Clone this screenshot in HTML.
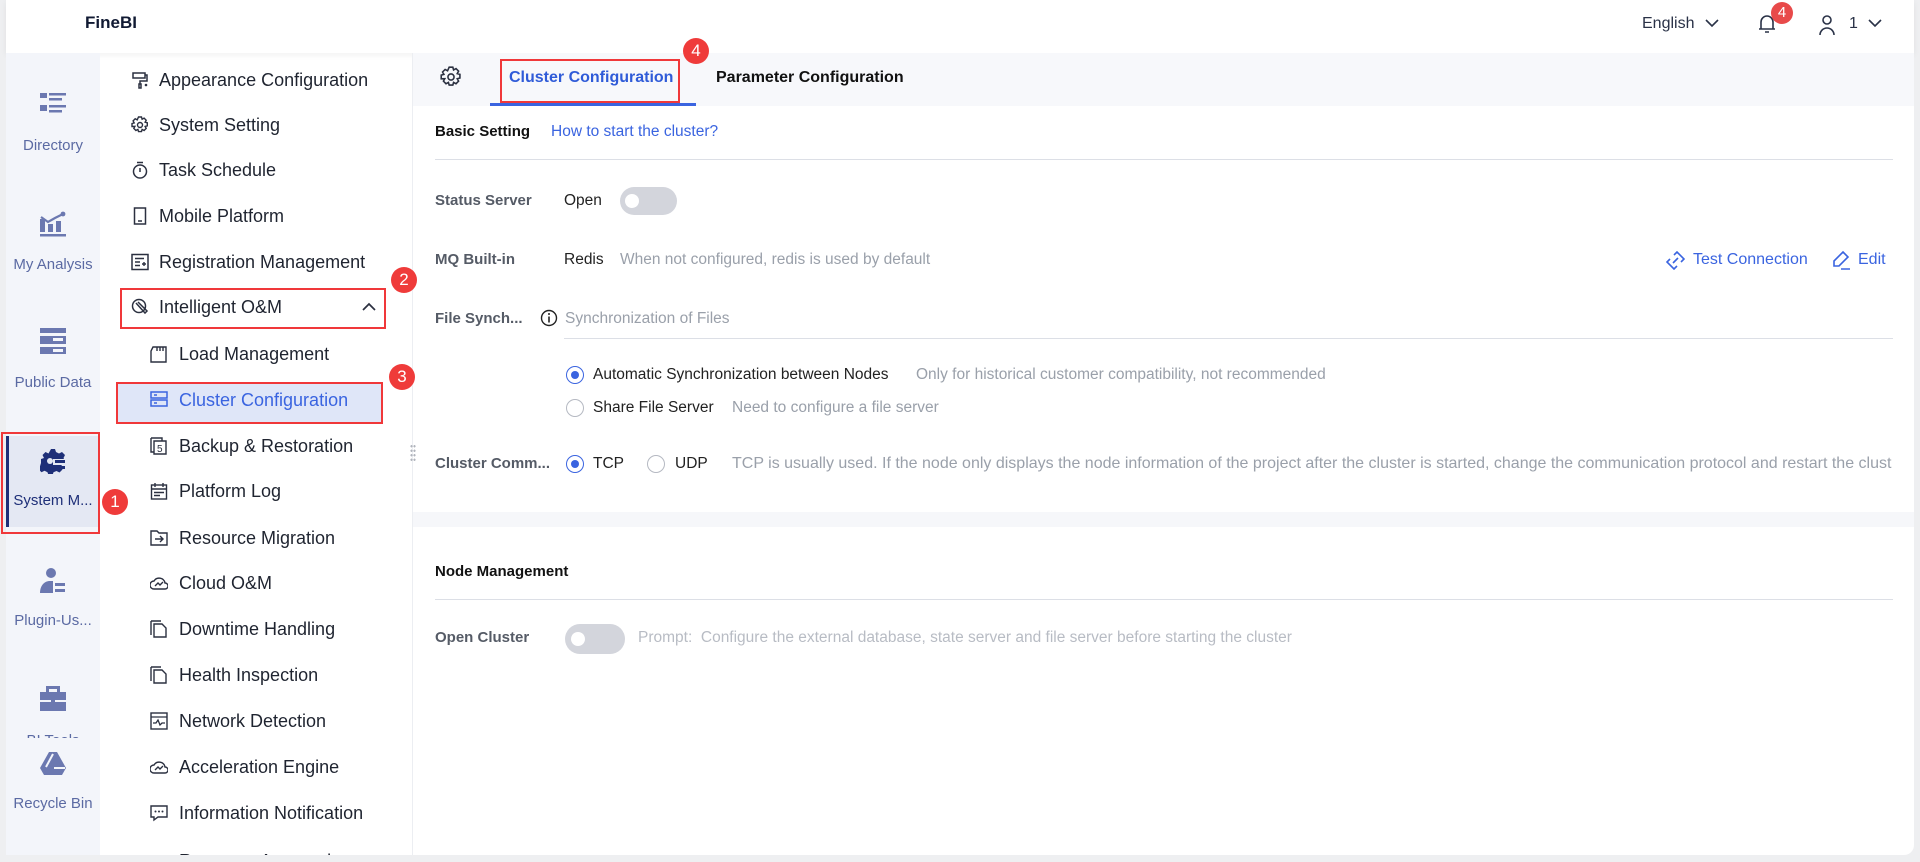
<!DOCTYPE html>
<html><head><meta charset="utf-8"><style>
*{margin:0;padding:0;box-sizing:border-box}
body{width:1920px;height:862px;background:#eeeff1;font-family:"Liberation Sans",Arial,sans-serif;position:relative;overflow:hidden;color:#222}
.a{position:absolute;white-space:nowrap}
.frame{position:absolute;left:6px;top:0;width:1908px;height:855px;background:#fff;border-radius:0 0 10px 10px;overflow:hidden}
.t{position:absolute;white-space:nowrap;height:24px;line-height:24px}
.mi{position:absolute;left:159px;font-size:18px;color:#1f2430;height:24px;line-height:24px;white-space:nowrap}
.sub{left:179px}
.ic{position:absolute;width:18px;height:18px}
.lb{position:absolute;left:6px;width:94px;text-align:center;font-size:15px;color:#5b6aa3;white-space:nowrap}
.lbl{font-size:15px;font-weight:bold;color:#555b66;left:435px}
.hint{color:#9aa0aa;font-size:15.5px}
.val{font-size:15.5px;color:#222}
.red{position:absolute;border:2.5px solid #f0383a}
.badge{position:absolute;width:26px;height:26px;border-radius:50%;background:#ef3b3a;color:#fff;font-size:17px;text-align:center;line-height:26px}
.radio{position:absolute;width:18px;height:18px;border-radius:50%;border:1.5px solid #b5b9c2;background:#fff}
.radio.on{border-color:#3a64e0}
.radio.on:after{content:"";position:absolute;left:3.5px;top:3.5px;width:8px;height:8px;border-radius:50%;background:#3a64e0}
</style></head><body>
<div class="frame"></div>
<!-- header -->
<div class="a" style="left:6px;top:0;width:1908px;height:53px;background:#fff;box-shadow:0 2px 6px rgba(0,0,0,0.06)"></div>
<div class="t" style="left:85px;top:11px;font-size:17px;font-weight:bold;color:#111a33">FineBI</div>
<div class="t" style="left:1642px;top:12px;font-size:16px;color:#2a3247">English</div>
<svg class="a" style="left:1704px;top:17px" width="16" height="12" viewBox="0 0 16 12"><path d="M2 3l6 6 6-6" fill="none" stroke="#2a3247" stroke-width="1.6"/></svg>
<svg class="a" style="left:1757px;top:13px" width="20" height="22" viewBox="0 0 20 22"><path d="M4 16V9a6 6 0 0 1 12 0v7M2 16h16M8 19h4" fill="none" stroke="#2a3247" stroke-width="1.6"/></svg>
<div class="a" style="left:1771px;top:2px;width:22px;height:22px;border-radius:50%;background:#e84a4a;color:#fff;font-size:15px;text-align:center;line-height:22px">4</div>
<svg class="a" style="left:1818px;top:14px" width="18" height="22" viewBox="0 0 18 22"><circle cx="9" cy="6" r="4" fill="none" stroke="#2a3247" stroke-width="1.6"/><path d="M2 21a7 7 0 0 1 14 0" fill="none" stroke="#2a3247" stroke-width="1.6"/></svg>
<div class="t" style="left:1849px;top:12px;font-size:16px;color:#2a3247">1</div>
<svg class="a" style="left:1867px;top:17px" width="16" height="12" viewBox="0 0 16 12"><path d="M2 3l6 6 6-6" fill="none" stroke="#2a3247" stroke-width="1.6"/></svg>

<!-- left bar -->
<div class="a" style="left:6px;top:53px;width:94px;height:802px;background:#f3f5fa;border-radius:0 0 0 10px"></div>
<div class="a" style="left:6px;top:436px;width:94px;height:91px;background:#e4e8f3"></div>
<div class="a" style="left:6px;top:436px;width:3px;height:91px;background:#1e2f78"></div>
<svg class="a" style="left:40px;top:93px" width="26" height="24" viewBox="0 0 26 24"><g fill="#6b78b0"><rect x="0" y="0" width="7" height="5"/><rect x="9" y="0" width="17" height="2.5"/><rect x="9" y="5" width="13" height="2.5"/><rect x="0" y="12" width="7" height="6"/><rect x="9" y="12" width="17" height="2.5"/><rect x="9" y="17" width="13" height="2.5"/></g></svg>
<div class="lb" style="top:137px">Directory</div>
<svg class="a" style="left:40px;top:211px" width="26" height="26" viewBox="0 0 26 26"><g fill="#6b78b0"><rect x="0" y="8" width="5" height="13"/><rect x="8" y="13" width="5" height="8"/><rect x="16" y="10" width="5" height="11"/><rect x="0" y="23" width="26" height="2.5"/></g><path d="M1 6l7 5 7-4 8-4" stroke="#6b78b0" stroke-width="2.2" fill="none"/><circle cx="23" cy="3" r="2.4" fill="#6b78b0"/></svg>
<div class="lb" style="top:256px">My Analysis</div>
<svg class="a" style="left:40px;top:328px" width="26" height="26" viewBox="0 0 26 26"><g fill="#6b78b0"><rect x="0" y="0" width="26" height="5"/><rect x="0" y="8" width="26" height="8"/><rect x="0" y="19" width="26" height="7"/></g><rect x="13" y="10" width="10" height="3" fill="#f3f5fa"/><rect x="13" y="21" width="10" height="3" fill="#f3f5fa"/></svg>
<div class="lb" style="top:374px">Public Data</div>
<svg class="a" style="left:40px;top:448px" width="26" height="26" viewBox="0 0 26 26"><path d="M11 1h4l1 3 3 1.5 3-1.5 3 3-1.5 3 .5 1H13v6h9l-1 1.5 1.5 3-3 3-3-1.5-3 1.2-1 3h-4l-1-3-3-1.5-3 1.5-3-3 1.5-3L1 15v-4l3-1-1.5-3 3-3 3 1.5z" fill="#1e2f78"/><rect x="15" y="12" width="10" height="3" fill="#1e2f78"/><rect x="15" y="18" width="10" height="3" fill="#1e2f78"/><circle cx="10" cy="13" r="3" fill="#e4e8f3"/></svg>
<div class="lb" style="top:492px;color:#1e2f78">System M...</div>
<svg class="a" style="left:40px;top:567px" width="26" height="26" viewBox="0 0 26 26"><g fill="#6b78b0"><circle cx="11" cy="6" r="5"/><path d="M0 26c0-7 4-12 10-12h3v12z"/><rect x="15" y="16" width="10" height="3"/><rect x="15" y="22" width="10" height="3"/></g></svg>
<div class="lb" style="top:612px">Plugin-Us...</div>
<svg class="a" style="left:40px;top:686px" width="26" height="26" viewBox="0 0 26 26"><g fill="#6b78b0"><rect x="8" y="0" width="10" height="3"/><rect x="6" y="0" width="3" height="6"/><rect x="17" y="0" width="3" height="6"/><rect x="0" y="6" width="26" height="8"/><rect x="0" y="16" width="26" height="9"/><rect x="11" y="11" width="4" height="8"/></g></svg>
<div class="a" style="left:6px;top:732px;width:94px;height:6px;overflow:hidden"><div class="lb" style="left:0;top:0;">BI Tools</div></div>
<div class="a" style="left:6px;top:738px;width:94px;height:117px;background:#f3f5fa"></div>
<svg class="a" style="left:40px;top:752px" width="26" height="24" viewBox="0 0 26 24"><path d="M9 0h8l9 16-4 7H4l-4-7z" fill="#6b78b0"/><path d="M13 2L6 15M14 16h11" stroke="#f3f5fa" stroke-width="2"/></svg>
<div class="lb" style="top:795px">Recycle Bin</div>

<!-- menu -->
<svg class="ic" style="left:131px;top:71px" viewBox="0 0 18 18"><path d="M2 2h12v5H2zM14 4h2v6H9v3M8 13h2v4H8z" fill="none" stroke="#2b3040" stroke-width="1.5"/><circle cx="15" cy="14" r="1.3" fill="#2b3040"/></svg>
<div class="mi" style="top:68px">Appearance Configuration</div>
<svg class="ic" style="left:131px;top:116px" viewBox="0 0 18 18"><path d="M7.5 1h3l.6 2.2 2-1.1 2.1 2.1-1.1 2 2.2.6v3l-2.2.6 1.1 2-2.1 2.1-2-1.1-.6 2.2h-3l-.6-2.2-2 1.1-2.1-2.1 1.1-2L1 10.5v-3l2.2-.6-1.1-2 2.1-2.1 2 1.1z" fill="none" stroke="#2b3040" stroke-width="1.4"/><circle cx="9" cy="9" r="2.5" fill="none" stroke="#2b3040" stroke-width="1.4"/></svg>
<div class="mi" style="top:113px">System Setting</div>
<svg class="ic" style="left:131px;top:161px" viewBox="0 0 18 18"><circle cx="9" cy="10.5" r="6.5" fill="none" stroke="#2b3040" stroke-width="1.5"/><path d="M6 1.5h6M9 7v4" stroke="#2b3040" stroke-width="1.5"/></svg>
<div class="mi" style="top:158px">Task Schedule</div>
<svg class="ic" style="left:131px;top:207px" viewBox="0 0 18 18"><rect x="3.5" y="1" width="11" height="16" fill="none" stroke="#2b3040" stroke-width="1.5"/><path d="M7 14h4" stroke="#2b3040" stroke-width="1.5"/></svg>
<div class="mi" style="top:204px">Mobile Platform</div>
<svg class="ic" style="left:131px;top:253px" viewBox="0 0 18 18"><rect x="1" y="1.5" width="16" height="15" fill="none" stroke="#2b3040" stroke-width="1.5"/><path d="M4 5.5h9M4 9h5M4 12.5h5M11 11h4M13 9v4" stroke="#2b3040" stroke-width="1.4"/></svg>
<div class="mi" style="top:250px">Registration Management</div>
<svg class="ic" style="left:131px;top:298px" viewBox="0 0 18 18"><circle cx="8" cy="8" r="6.5" fill="none" stroke="#2b3040" stroke-width="1.5"/><path d="M5 5l9 10 2-2-9-9" fill="none" stroke="#2b3040" stroke-width="1.5"/></svg>
<div class="mi" style="top:295px">Intelligent O&amp;M</div>
<svg class="a" style="left:361px;top:301px" width="16" height="12" viewBox="0 0 16 12"><path d="M2 9l6-6 6 6" fill="none" stroke="#2b3040" stroke-width="1.7"/></svg>
<svg class="ic" style="left:150px;top:345px" viewBox="0 0 18 18"><path d="M3 2h13v15H1V6zM7 2v4M10 2v4M13 2v4" fill="none" stroke="#2b3040" stroke-width="1.4"/></svg>
<div class="mi sub" style="top:342px">Load Management</div>
<div class="a" style="left:116px;top:382px;width:267px;height:42px;background:#dfe6f8"></div>
<svg class="ic" style="left:150px;top:390px" viewBox="0 0 18 18"><rect x="1" y="2" width="16" height="6" fill="none" stroke="#3a64e0" stroke-width="1.5"/><rect x="1" y="10" width="16" height="6" fill="none" stroke="#3a64e0" stroke-width="1.5"/><path d="M4 5h3M4 13h3" stroke="#3a64e0" stroke-width="1.5"/></svg>
<div class="mi sub" style="top:388px;color:#3a64e0">Cluster Configuration</div>
<svg class="ic" style="left:150px;top:437px" viewBox="0 0 18 18"><path d="M1 1h11v3M1 1v14h3M4 4h12v13H4z" fill="none" stroke="#2b3040" stroke-width="1.4"/><text x="7" y="15" font-size="10" fill="#2b3040" font-family="Liberation Sans">5</text></svg>
<div class="mi sub" style="top:434px">Backup &amp; Restoration</div>
<svg class="ic" style="left:150px;top:482px" viewBox="0 0 18 18"><rect x="1.5" y="3" width="15" height="14" fill="none" stroke="#2b3040" stroke-width="1.4"/><path d="M5 1v4M13 1v4M1.5 7h15M4 10.5h10M4 13.5h6" stroke="#2b3040" stroke-width="1.4"/></svg>
<div class="mi sub" style="top:479px">Platform Log</div>
<svg class="ic" style="left:150px;top:529px" viewBox="0 0 18 18"><path d="M1 2h6l2 2h8v12H1z" fill="none" stroke="#2b3040" stroke-width="1.4"/><path d="M5 10h8M10 7l3 3-3 3" fill="none" stroke="#2b3040" stroke-width="1.4"/></svg>
<div class="mi sub" style="top:526px">Resource Migration</div>
<svg class="ic" style="left:150px;top:574px" viewBox="0 0 18 18"><path d="M4 15a4 4 0 0 1 0-8 6 6 0 0 1 11 2 3 3 0 0 1 0 6z" fill="none" stroke="#2b3040" stroke-width="1.4"/><path d="M5 12l3-3 2 2 3-3" fill="none" stroke="#2b3040" stroke-width="1.4"/></svg>
<div class="mi sub" style="top:571px">Cloud O&amp;M</div>
<svg class="ic" style="left:150px;top:620px" viewBox="0 0 18 18"><path d="M1 1h10M1 1v14M4 4h8l4 4v9H4z" fill="none" stroke="#2b3040" stroke-width="1.4"/></svg>
<div class="mi sub" style="top:617px">Downtime Handling</div>
<svg class="ic" style="left:150px;top:666px" viewBox="0 0 18 18"><path d="M1 1h10M1 1v14M4 4h8l4 4v9H4z" fill="none" stroke="#2b3040" stroke-width="1.4"/></svg>
<div class="mi sub" style="top:663px">Health Inspection</div>
<svg class="ic" style="left:150px;top:712px" viewBox="0 0 18 18"><rect x="1" y="1" width="16" height="16" fill="none" stroke="#2b3040" stroke-width="1.4"/><path d="M1 5h16M3 11h3l2-3 2 5 2-2h3" fill="none" stroke="#2b3040" stroke-width="1.3"/></svg>
<div class="mi sub" style="top:709px">Network Detection</div>
<svg class="ic" style="left:150px;top:758px" viewBox="0 0 18 18"><path d="M4 15a4 4 0 0 1 0-8 6 6 0 0 1 11 2 3 3 0 0 1 0 6z" fill="none" stroke="#2b3040" stroke-width="1.4"/><path d="M5 12l3-3 2 2 3-3" fill="none" stroke="#2b3040" stroke-width="1.4"/></svg>
<div class="mi sub" style="top:755px">Acceleration Engine</div>
<svg class="ic" style="left:150px;top:804px" viewBox="0 0 18 18"><path d="M1 2h16v11H8l-4 3v-3H1z" fill="none" stroke="#2b3040" stroke-width="1.4"/><circle cx="5.5" cy="7.5" r="1" fill="#2b3040"/><circle cx="9" cy="7.5" r="1" fill="#2b3040"/><circle cx="12.5" cy="7.5" r="1" fill="#2b3040"/></svg>
<div class="mi sub" style="top:801px">Information Notification</div>
<div class="a" style="left:150px;top:850px;width:200px;height:5px;overflow:hidden"><div class="mi" style="left:29px;top:-1px">Resource Approval</div></div>
<!-- divider & drag dots -->
<div class="a" style="left:412px;top:53px;width:1px;height:802px;background:#eceef2"></div>
<div class="a" style="left:410px;top:444px;width:6px;height:18px;background:radial-gradient(circle,#b0b4bc 1px,transparent 1.3px) 0 0/3px 4.5px"></div>

<!-- tabs -->
<div class="a" style="left:413px;top:53px;width:1501px;height:53px;background:#f7f8fb"></div>
<svg class="a" style="left:440px;top:66px" width="22" height="22" viewBox="0 0 18 18"><path d="M7.5 1h3l.6 2.2 2-1.1 2.1 2.1-1.1 2 2.2.6v3l-2.2.6 1.1 2-2.1 2.1-2-1.1-.6 2.2h-3l-.6-2.2-2 1.1-2.1-2.1 1.1-2L1 10.5v-3l2.2-.6-1.1-2 2.1-2.1 2 1.1z" fill="none" stroke="#2b3040" stroke-width="1.3"/><circle cx="9" cy="9" r="2.5" fill="none" stroke="#2b3040" stroke-width="1.3"/></svg>
<div class="t" style="left:509px;top:66px;font-size:16px;font-weight:bold;color:#2f5bd8">Cluster Configuration</div>
<div class="a" style="left:490px;top:103px;width:206px;height:3px;background:#3a64e0"></div>
<div class="t" style="left:716px;top:66px;font-size:16px;font-weight:bold;color:#111">Parameter Configuration</div>

<!-- content -->
<div class="t" style="left:435px;top:120px;font-size:15px;font-weight:bold;color:#111">Basic Setting</div>
<div class="t" style="left:551px;top:120px;font-size:15.5px;color:#3a64e0">How to start the cluster?</div>
<div class="a" style="left:435px;top:159px;width:1458px;height:1px;background:#dcdfe6"></div>

<div class="t lbl" style="top:189px">Status Server</div>
<div class="t val" style="left:564px;top:189px">Open</div>
<div class="a" style="left:620px;top:187px;width:57px;height:28px;border-radius:14px;background:#d3d5dc"><div style="position:absolute;left:5px;top:7px;width:14px;height:14px;border-radius:50%;background:#fff"></div></div>

<div class="t lbl" style="top:248px">MQ Built-in</div>
<div class="t val" style="left:564px;top:248px">Redis</div>
<div class="t hint" style="left:620px;top:248px">When not configured, redis is used by default</div>
<svg class="a" style="left:1666px;top:251px" width="19" height="19" viewBox="0 0 19 19"><path d="M8 4l3-3 7 7-3 3M11 15l-3 3-7-7 3-3M7 12l5-5" fill="none" stroke="#3a64e0" stroke-width="1.6"/></svg>
<div class="t" style="left:1693px;top:248px;font-size:16px;color:#3a64e0">Test Connection</div>
<svg class="a" style="left:1831px;top:250px" width="20" height="20" viewBox="0 0 20 20"><path d="M12 2l5 5-9 9H3v-5zM10 19h9" fill="none" stroke="#3a64e0" stroke-width="1.6"/></svg>
<div class="t" style="left:1858px;top:248px;font-size:16px;color:#3a64e0">Edit</div>

<div class="t lbl" style="top:307px">File Synch...</div>
<svg class="a" style="left:540px;top:309px" width="18" height="18" viewBox="0 0 18 18"><circle cx="9" cy="9" r="7.5" fill="none" stroke="#222" stroke-width="1.4"/><path d="M9 7.5v6" stroke="#222" stroke-width="1.6"/><circle cx="9" cy="5" r="1" fill="#222"/></svg>
<div class="t hint" style="left:565px;top:307px">Synchronization of Files</div>
<div class="a" style="left:564px;top:338px;width:1329px;height:1px;background:#dcdfe6"></div>

<div class="radio on" style="left:566px;top:366px"></div>
<div class="t val" style="left:593px;top:363px">Automatic Synchronization between Nodes</div>
<div class="t hint" style="left:916px;top:363px">Only for historical customer compatibility, not recommended</div>
<div class="radio" style="left:566px;top:399px"></div>
<div class="t val" style="left:593px;top:396px">Share File Server</div>
<div class="t hint" style="left:732px;top:396px">Need to configure a file server</div>

<div class="t lbl" style="top:452px">Cluster Comm...</div>
<div class="radio on" style="left:566px;top:455px"></div>
<div class="t val" style="left:593px;top:452px">TCP</div>
<div class="radio" style="left:647px;top:455px"></div>
<div class="t val" style="left:675px;top:452px">UDP</div>
<div class="a" style="left:732px;top:452px;width:1160px;overflow:hidden;height:24px"><div class="t hint" style="left:0;top:0;font-size:16px">TCP is usually used. If the node only displays the node information of the project after the cluster is started, change the communication protocol and restart the cluster</div></div>

<div class="a" style="left:413px;top:512px;width:1501px;height:15px;background:#f6f7fa"></div>

<div class="t" style="left:435px;top:560px;font-size:15px;font-weight:bold;color:#111">Node Management</div>
<div class="a" style="left:435px;top:599px;width:1458px;height:1px;background:#dcdfe6"></div>
<div class="t lbl" style="top:626px">Open Cluster</div>
<div class="a" style="left:565px;top:624px;width:60px;height:30px;border-radius:15px;background:#d3d5dc"><div style="position:absolute;left:6px;top:8px;width:14px;height:14px;border-radius:50%;background:#fff"></div></div>
<div class="t" style="left:638px;top:626px;font-size:15.5px;color:#b8bcc4">Prompt:&nbsp; Configure the external database, state server and file server before starting the cluster</div>

<!-- annotations -->
<div class="red" style="left:1px;top:432px;width:99px;height:102px"></div>
<div class="badge" style="left:102px;top:489px">1</div>
<div class="red" style="left:120px;top:288px;width:266px;height:41px"></div>
<div class="badge" style="left:391px;top:267px">2</div>
<div class="red" style="left:116px;top:382px;width:267px;height:42px"></div>
<div class="badge" style="left:389px;top:364px">3</div>
<div class="red" style="left:500px;top:59px;width:180px;height:44px"></div>
<div class="badge" style="left:683px;top:38px">4</div>
</body></html>
